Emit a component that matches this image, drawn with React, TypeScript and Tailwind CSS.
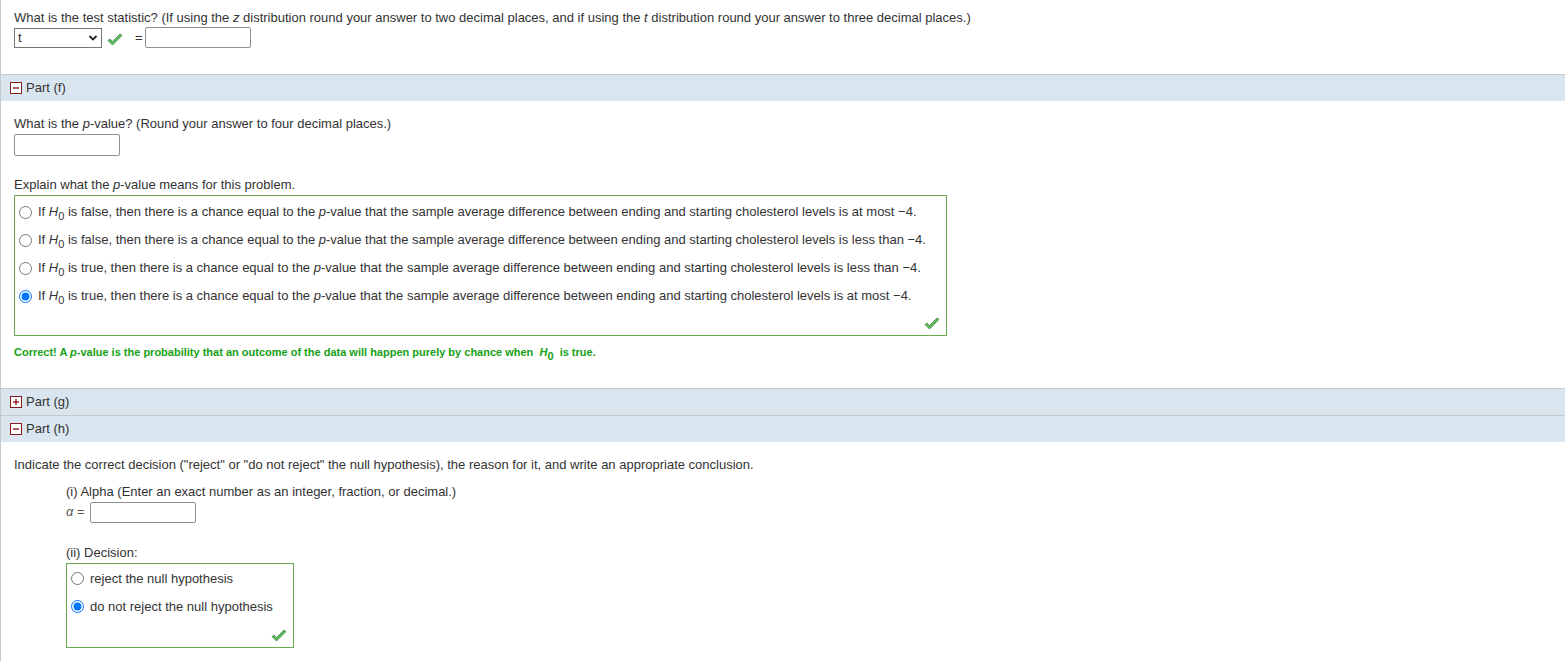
import React from "react";

const font = { fontFamily: '"Liberation Sans", Arial, sans-serif' };

function Check({ className = "" }: { className?: string }) {
  return (
    <svg viewBox="0 0 16 14" className={className} width="16" height="14">
      <path
        d="M1 7.5 L5.5 12 L15 2.5 L13 1 L5.5 8.5 L3 6 Z"
        fill="#5fb760"
        stroke="#3f8f3f"
        strokeWidth="0.8"
        strokeLinejoin="round"
      />
    </svg>
  );
}

function H0() {
  return (
    <span>
      <i>H</i>
      <span className="relative top-[4px] text-[11px] not-italic">0</span>
    </span>
  );
}

function PartHeader({ label, open }: { label: string; open: boolean }) {
  return (
    <div className="flex h-[27px] items-center border-t border-[#c8c8c8] bg-[#d9e5ef] pl-[9px]">
      <span className="flex h-[12px] w-[12px] items-center justify-center border border-[#8b1a1a] bg-white">
        <svg viewBox="0 0 10 10" width="10" height="10">
          <path d="M2 5 H8" stroke="#8b1a1a" strokeWidth="1.4" />
          {!open && <path d="M5 2 V8" stroke="#8b1a1a" strokeWidth="1.4" />}
        </svg>
      </span>
      <span className="ml-[4px] text-[13px] text-[#333]">{label}</span>
    </div>
  );
}

function Radio({ checked, name, children }: { checked?: boolean; name: string; children: React.ReactNode }) {
  return (
    <label className="flex h-[28px] items-center">
      <input
        type="radio"
        name={name}
        defaultChecked={checked}
        className="m-0 ml-[4px] h-[13px] w-[13px]"
      />
      <span className="ml-[6px]">{children}</span>
    </label>
  );
}

const opts = [
  ["false", "is at most −4."],
  ["false", "is less than −4."],
  ["true", "is less than −4."],
  ["true", "is at most −4."],
];

export default function App() {
  return (
    <div className="min-h-[661px] bg-white text-[13px] text-[#333]" style={font}>
      <div className="mr-px min-h-[661px] border-l border-[#c8c8c8]">
        <div className="px-[13px] pt-[10px] pb-[26px]">
          <p className="leading-[15px]">
            What is the test statistic? (If using the <i>z</i> distribution round your answer to two decimal places, and if using the <i>t</i> distribution round your answer to three decimal places.)
          </p>
          <div className="mt-[2px] flex items-center">
            <div className="flex h-[20px] w-[88px] items-center justify-between border border-[#767676] pl-[3px] pr-[3px]">
              <span>t</span>
              <svg viewBox="0 0 10 10" width="10" height="10">
                <path d="M1.5 3 L5 6.5 L8.5 3" fill="none" stroke="#222" strokeWidth="1.8" />
              </svg>
            </div>
            <Check className="ml-[5px] mt-[4px]" />
            <span className="ml-[12px]">=</span>
            <div className="ml-[2px] h-[21px] w-[106px] rounded-[2px] border border-[#8f8f8f]" />
          </div>
        </div>

        <PartHeader label="Part (f)" open />

        <div className="px-[13px] pt-[15px] pb-[27px]">
          <p className="leading-[15px]">
            What is the <i>p</i>-value? (Round your answer to four decimal places.)
          </p>
          <div className="mt-[3px] h-[22px] w-[106px] rounded-[2px] border border-[#8f8f8f]" />
          <p className="mt-[21px] leading-[15px]">
            Explain what the <i>p</i>-value means for this problem.
          </p>
          <div className="mt-[3px] w-[933px] border border-[#6aa84f] pt-[2px] pb-[4px]">
            {opts.map(([tf, end], i) => (
              <Radio key={i} name="pv" checked={i === 3}>
                If <H0 /> is {tf}, then there is a chance equal to the <i>p</i>-value that the sample average difference between ending and starting cholesterol levels {end}
              </Radio>
            ))}
            <div className="mt-[7px] flex justify-end pr-[6px]">
              <Check />
            </div>
          </div>
          <p className="mt-[8px] text-[11px] font-bold text-[#16a116]">
            Correct! A <i>p</i>-value is the probability that an outcome of the data will happen purely by chance when&nbsp; <H0 />&nbsp; is true.
          </p>
        </div>

        <PartHeader label="Part (g)" open={false} />
        <PartHeader label="Part (h)" open />

        <div className="px-[13px] pt-[15px]">
          <p className="leading-[15px]">
            Indicate the correct decision ("reject" or "do not reject" the null hypothesis), the reason for it, and write an appropriate conclusion.
          </p>
          <div className="ml-[52px]">
            <p className="mt-[12px] leading-[15px]">(i) Alpha (Enter an exact number as an integer, fraction, or decimal.)</p>
            <div className="mt-[3px] flex items-center">
              <span className="text-[#555]">
                <i>α</i> =
              </span>
              <div className="ml-[5px] h-[21px] w-[106px] rounded-[2px] border border-[#8f8f8f]" />
            </div>
            <p className="mt-[22px] leading-[15px]">(ii) Decision:</p>
            <div className="mt-[3px] w-[228px] border border-[#6aa84f] pt-[1px] pb-[4px]">
              <Radio name="dec">reject the null hypothesis</Radio>
              <Radio name="dec" checked>do not reject the null hypothesis</Radio>
              <div className="mt-[8px] flex justify-end pr-[6px]">
                <Check />
              </div>
            </div>
          </div>
        </div>
      </div>
    </div>
  );
}
